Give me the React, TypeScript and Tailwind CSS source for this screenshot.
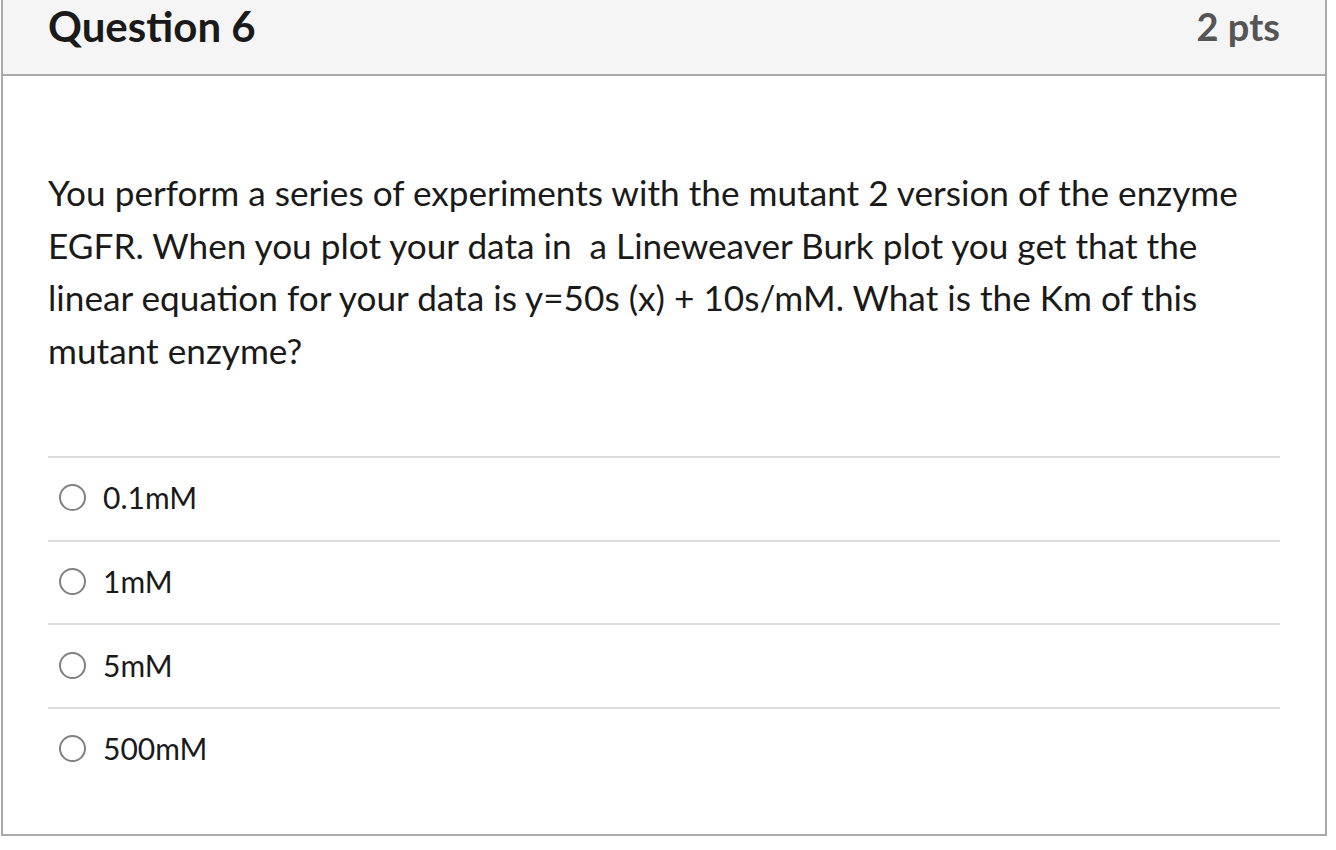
export default function App() {
  const answers = ["0.1mM", "1mM", "5mM", "500mM"];
  return (
    <div className="w-[1336px] h-[850px] bg-white" style={{ fontFamily: "Lato, 'Open Sans', sans-serif" }}>
      <div className="ml-px w-[1326px] h-[836px] border-2 border-t-0 border-[#aaaaaa] flex flex-col">
        <div className="h-[76px] bg-[#f5f5f5] border-b-2 border-[#aaaaaa] flex items-start justify-between pl-[45px] pr-[45px] pt-0">
          <div className="text-[42px] font-bold text-[#1a1a1a] leading-[52px]">Question 6</div>
          <div className="text-[38px] font-bold text-[#555555] leading-[52px]">2 pts</div>
        </div>
        <div className="pl-[45px] pr-[45px] pt-[90px]">
          <p className="text-[35.2px] leading-[52.5px] text-[#1a1a1a] m-0">
            You perform a series of experiments with the mutant 2 version of the enzyme EGFR. When you plot your data in&nbsp; a Lineweaver Burk plot you get that the linear equation for your data is y=50s (x) + 10s/mM. What is the Km of this mutant enzyme?
          </p>
          <div className="mt-[80px]">
            {answers.map((a) => (
              <div key={a} className="border-t-2 border-[#dddddd] h-[83.7px] flex items-center pb-[2px]">
                <div className="ml-[11px] w-[27px] h-[27px] rounded-full border-2 border-[#808080]" />
                <div className="ml-[17px] text-[30px] text-[#1a1a1a]">{a}</div>
              </div>
            ))}
          </div>
        </div>
      </div>
    </div>
  );
}
